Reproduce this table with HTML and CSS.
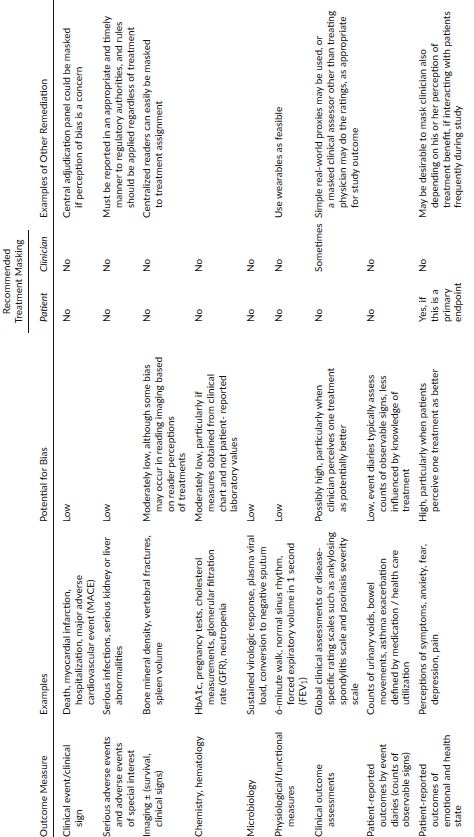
FILE: index.html
```html
<!DOCTYPE html>
<html lang="en">
<head>
<meta charset="utf-8">
<title>Treatment masking by outcome measure</title>
<link rel="stylesheet" href="styles.css">
</head>
<body>
<div class="stage">
  <div class="rot">
    <table class="masking">
      <colgroup>
        <col class="c1"><col class="c2"><col class="c3"><col class="c4"><col class="c5"><col class="c6">
      </colgroup>
      <thead>
        <tr class="h1">
          <th rowspan="2" class="hb">Outcome Measure</th>
          <th rowspan="2" class="hb">Examples</th>
          <th rowspan="2" class="hb">Potential for Bias</th>
          <th colspan="2" class="group"><div class="group-in">Recommended<br>Treatment Masking</div></th>
          <th rowspan="2" class="hb">Examples of Other Remediation</th>
        </tr>
        <tr class="h2">
          <th class="sub">Patient</th>
          <th class="sub">Clinician</th>
        </tr>
      </thead>
      <tbody>
        <tr class="first">
          <td><div class="hang">Clinical event/clinical<br>sign</div></td>
          <td><div class="hang">Death, myocardial infarction,<br>hospitalization, major adverse<br>cardiovascular event (MACE)</div></td>
          <td><div class="hang">Low</div></td>
          <td>No</td>
          <td>No</td>
          <td><div class="hang">Central adjudication panel could be masked<br>if perception of bias is a concern</div></td>
        </tr>
        <tr>
          <td><div class="hang">Serious adverse events<br>and adverse events<br>of special interest</div></td>
          <td><div class="hang">Serious infections, serious kidney or liver<br>abnormalities</div></td>
          <td><div class="hang">Low</div></td>
          <td>No</td>
          <td>No</td>
          <td><div class="hang">Must be reported in an appropriate and timely<br>manner to regulatory authorities, and rules<br>should be applied regardless of treatment</div></td>
        </tr>
        <tr>
          <td><div class="hang">Imaging &plusmn; (survival,<br>clinical signs)</div></td>
          <td><div class="hang">Bone mineral density, vertebral fractures,<br>spleen volume</div></td>
          <td><div class="hang">Moderately low, although some bias<br>may occur in reading imaging based<br>on reader perceptions<br>of treatments</div></td>
          <td>No</td>
          <td>No</td>
          <td><div class="hang">Centralized readers can easily be masked<br>to treatment assignment</div></td>
        </tr>
        <tr>
          <td><div class="hang">Chemistry, hematology</div></td>
          <td><div class="hang">HbA1c, pregnancy tests, cholesterol<br>measurements, glomerular filtration<br>rate (GFR), neutropenia</div></td>
          <td><div class="hang">Moderately low, particularly if<br>measures obtained from clinical<br>chart and not patient- reported<br>laboratory values</div></td>
          <td>No</td>
          <td>No</td>
          <td></td>
        </tr>
        <tr>
          <td><div class="hang">Microbiology</div></td>
          <td><div class="hang">Sustained virologic response, plasma viral<br>load, conversion to negative sputum</div></td>
          <td><div class="hang">Low</div></td>
          <td>No</td>
          <td>No</td>
          <td></td>
        </tr>
        <tr>
          <td><div class="hang">Physiological/functional<br>measures</div></td>
          <td><div class="hang">6-minute walk, normal sinus rhythm,<br>forced expiratory volume in 1 second<br>(FEV<sub>1</sub>)</div></td>
          <td><div class="hang">Low</div></td>
          <td>No</td>
          <td>No</td>
          <td><div class="hang">Use wearables as feasible</div></td>
        </tr>
        <tr>
          <td><div class="hang">Clinical outcome<br>assessments</div></td>
          <td><div class="hang">Global clinical assessments or disease-<br>specific rating scales such as ankylosing<br>spondylitis scale and psoriasis severity<br>scale</div></td>
          <td><div class="hang">Possibly high, particularly when<br>clinician perceives one treatment<br>as potentially better</div></td>
          <td>No</td>
          <td>Sometimes</td>
          <td><div class="hang">Simple real-world proxies may be used, or<br>a masked clinical assessor other than treating<br>physician may do the ratings, as appropriate<br>for study outcome</div></td>
        </tr>
        <tr>
          <td><div class="hang">Patient-reported<br>outcomes by event<br>diaries (counts of<br>observable signs)</div></td>
          <td><div class="hang">Counts of urinary voids, bowel<br>movements, asthma exacerbation<br>defined by medication / health care<br>utilization</div></td>
          <td><div class="hang">Low, event diaries typically assess<br>counts of observable signs, less<br>influenced by knowledge of<br>treatment</div></td>
          <td>No</td>
          <td>No</td>
          <td></td>
        </tr>
        <tr>
          <td><div class="hang">Patient-reported<br>outcomes of<br>emotional and health<br>state</div></td>
          <td><div class="hang">Perceptions of symptoms, anxiety, fear,<br>depression, pain</div></td>
          <td><div class="hang">High, particularly when patients<br>perceive one treatment as better</div></td>
          <td>Yes, if<br>this is a<br>primary<br>endpoint</td>
          <td>No</td>
          <td><div class="hang">May be desirable to mask clinician also<br>depending on his or her perception of<br>treatment benefit, if interacting with patients<br>frequently during study</div></td>
        </tr>
      </tbody>
    </table>
  </div>
</div>
</body>
</html>
```

FILE: styles.css
```css
html, body {
  margin: 0;
  padding: 0;
  background: #ffffff;
}

.stage {
  width: 474px;
  height: 837px;
  overflow: hidden;
  background: #ffffff;
}

.rot {
  width: 837px;
  height: 474px;
  transform-origin: 0 0;
  transform: translateY(837px) rotate(-90deg);
}

.masking {
  width: 837px;
  border-collapse: collapse;
  table-layout: fixed;
  font-family: Lato, "Open Sans", "DejaVu Sans", sans-serif;
  font-size: 10px;
  line-height: 11.7px;
  color: #111111;
}

.c1 { width: 122px; }
.c2 { width: 193px; }
.c3 { width: 200px; }
.c4 { width: 50px; }
.c5 { width: 54px; }
.c6 { width: 218px; }

.masking th,
.masking td {
  padding: 0;
  text-align: left;
  vertical-align: top;
  font-weight: normal;
  white-space: nowrap;
}

.masking thead {
  border-bottom: 1px solid #111111;
}

.masking .hb {
  vertical-align: bottom;
  padding-bottom: 3.5px;
}

.masking .group {
  text-align: center;
  padding-top: 1px;
  padding-bottom: 0;
}

.group-in {
  margin-left: -11px;
  margin-right: 12px;
  padding-bottom: 3.5px;
  border-bottom: 1px solid #111111;
}

.masking .sub {
  font-style: italic;
  padding-top: 9px;
  padding-bottom: 3.5px;
}

.masking td {
  padding-bottom: 5px;
}

.masking tr.first td {
  padding-top: 7px;
}

.hang {
  padding-left: 10px;
  text-indent: -10px;
}

sub {
  font-size: 7px;
  line-height: 0;
  vertical-align: -1px;
}
```
